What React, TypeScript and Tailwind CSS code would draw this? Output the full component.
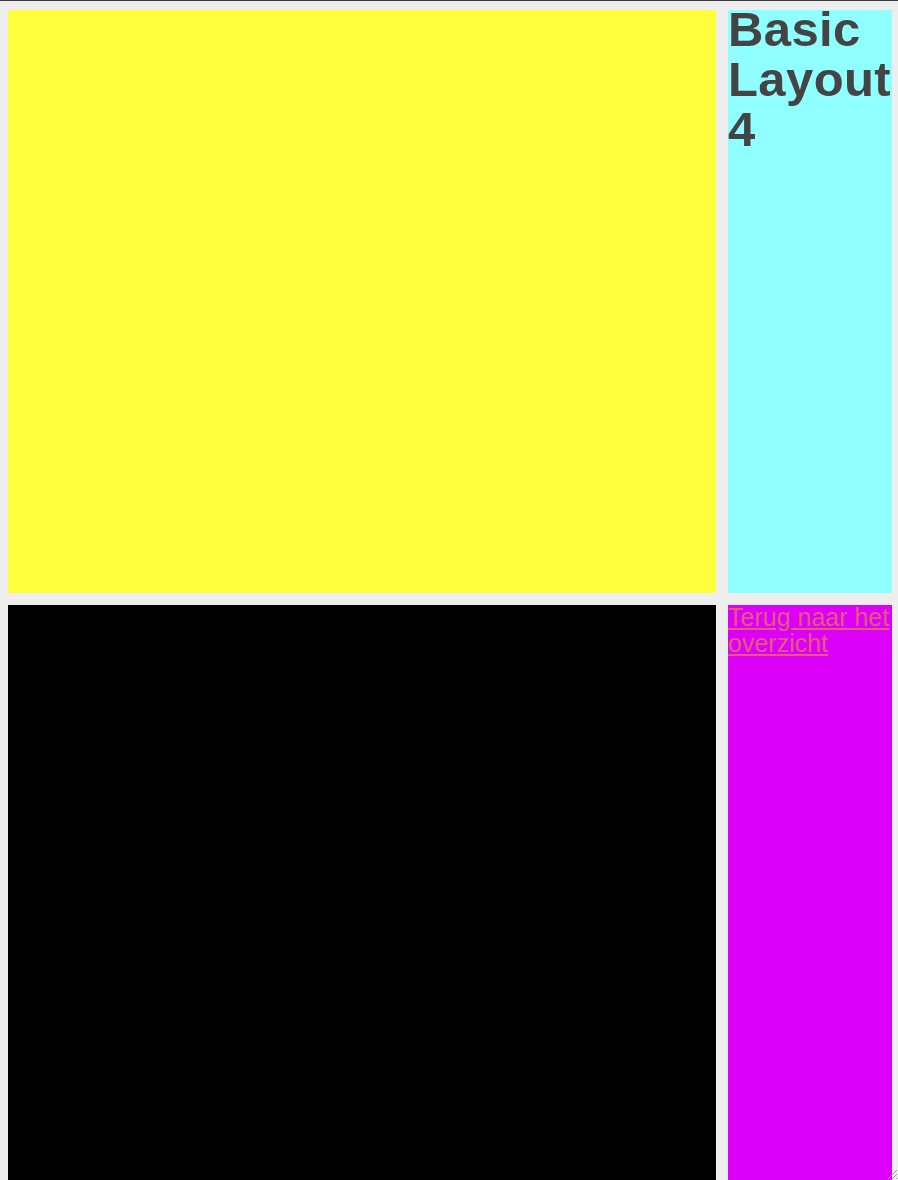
import React from "react";

export default function App() {
  return (
    <div className="relative min-h-[1180px] h-[1180px] overflow-hidden bg-[#eeeeee]" style={{ fontFamily: '"Liberation Sans", Arial, sans-serif' }}>
      <div className="h-px bg-[#3a3a3a]" />
      <div className="grid grid-cols-[708px_164px] grid-rows-[583px_600px] gap-[12px] pl-[8px] pt-[9px]">
        <div className="bg-[#ffff3b]" />
        <div className="bg-[#8fffff] overflow-visible">
          <h1 className="-mt-[6px] text-[49px] leading-[50px] font-bold text-[#444444] tracking-[0.4px]">
            Basic Layout 4
          </h1>
        </div>
        <div className="bg-black" />
        <div className="bg-[#dc00fa]">
          <a href="#" className="block text-[25px] leading-[26px] -mt-[1px] text-[#e25c78] underline">
            Terug naar het overzicht
          </a>
        </div>
      </div>
      <svg className="absolute right-0 bottom-0" width="12" height="12" viewBox="0 0 12 12">
        <line x1="11" y1="2" x2="2" y2="11" stroke="#9a9a9a" strokeWidth="1" />
        <line x1="11" y1="6" x2="6" y2="11" stroke="#9a9a9a" strokeWidth="1" />
        <line x1="11" y1="10" x2="10" y2="11" stroke="#9a9a9a" strokeWidth="1" />
      </svg>
    </div>
  );
}
